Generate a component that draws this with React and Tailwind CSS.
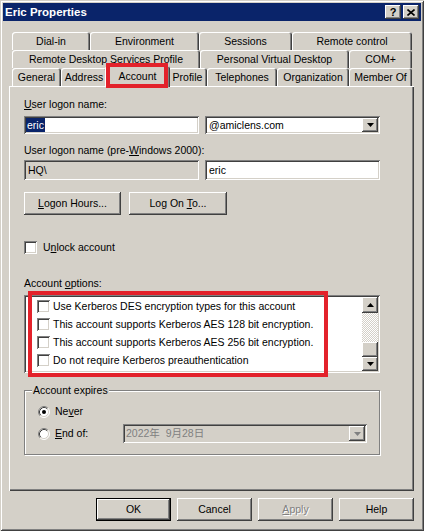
import React from 'react';

const RAISED =
  'shadow-[inset_-1px_-1px_0_#404040,inset_1px_1px_0_#ffffff,inset_-2px_-2px_0_#808080,inset_2px_2px_0_#d4d0c8]';
const SUNKEN =
  'shadow-[inset_1px_1px_0_#808080,inset_-1px_-1px_0_#ffffff,inset_2px_2px_0_#404040,inset_-2px_-2px_0_#d4d0c8]';

const tabRows = [
  [
    { label: 'Dial-in', w: 'w-[78px]' },
    { label: 'Environment', w: 'w-[109px]' },
    { label: 'Sessions', w: 'w-[93px]' },
    { label: 'Remote control', w: 'w-[120px]' },
  ],
  [
    { label: 'Remote Desktop Services Profile', w: 'w-[188px]' },
    { label: 'Personal Virtual Desktop', w: 'w-[149px]' },
    { label: 'COM+', w: 'w-[63px]' },
  ],
  [
    { label: 'General', w: 'w-[49px]' },
    { label: 'Address', w: 'w-[46px]' },
    { label: 'Account', w: 'w-[65px]', active: true },
    { label: 'Profile', w: 'w-[39px]' },
    { label: 'Telephones', w: 'w-[70px]' },
    { label: 'Organization', w: 'w-[72px]' },
    { label: 'Member Of', w: 'w-[63px]' },
  ],
];

const kerberosOptions = [
  'Use Kerberos DES encryption types for this account',
  'This account supports Kerberos AES 128 bit encryption.',
  'This account supports Kerberos AES 256 bit encryption.',
  'Do not require Kerberos preauthentication',
];

const Arrow = ({ up = false, color = '#000000' }) => (
  <svg width="7" height="4" viewBox="0 0 7 4">
    <polygon points={up ? '3.5,0 7,4 0,4' : '0,0 7,0 3.5,4'} fill={color} />
  </svg>
);

const CheckBox = () => <span className={`block w-[13px] h-[13px] bg-white shrink-0 ${SUNKEN}`} />;

const Radio = ({ checked }) => (
  <svg width="12" height="12" viewBox="0 0 12 12" className="shrink-0">
    <circle cx="6" cy="6" r="5" fill="#ffffff" />
    <path d="M2.11 9.89 A5.5 5.5 0 0 1 9.89 2.11" stroke="#808080" fill="none" />
    <path d="M9.89 2.11 A5.5 5.5 0 0 1 2.11 9.89" stroke="#ffffff" fill="none" />
    <path d="M2.82 9.18 A4.5 4.5 0 0 1 9.18 2.82" stroke="#404040" fill="none" />
    <path d="M9.18 2.82 A4.5 4.5 0 0 1 2.82 9.18" stroke="#d4d0c8" fill="none" />
    {checked && <circle cx="6" cy="6" r="2" fill="#000000" />}
  </svg>
);

const PushButton = ({ children, className = '' }) => (
  <button className={`h-[23px] flex items-center justify-center bg-[#d4d0c8] ${RAISED} ${className}`}>
    {children}
  </button>
);

export default function App() {
  return (
    <div className="relative w-[424px] h-[531px] bg-[#d4d0c8] p-[3px] flex flex-col font-['Liberation_Sans','Noto_Sans_CJK_SC',sans-serif] text-[10.5px] leading-[13px] text-black shadow-[inset_1px_1px_0_#d4d0c8,inset_-1px_-1px_0_#404040,inset_2px_2px_0_#ffffff,inset_-2px_-2px_0_#808080]">
      {/* Title bar */}
      <div className="h-[18px] shrink-0 bg-[#0a246a] flex items-center justify-between pl-[2px] pr-[2px]">
        <span className="text-white font-bold text-[11.5px]">Eric Properties</span>
        <div className="flex gap-[2px]">
          <div className={`w-[16px] h-[14px] bg-[#d4d0c8] flex items-center justify-center font-bold text-[11px] ${RAISED}`}>?</div>
          <div className={`w-[16px] h-[14px] bg-[#d4d0c8] flex items-center justify-center ${RAISED}`}>
            <svg width="8" height="7" viewBox="0 0 8 7">
              <path d="M0.5 0.5 L7.5 6.5 M7.5 0.5 L0.5 6.5" stroke="#000" strokeWidth="1.6" />
            </svg>
          </div>
        </div>
      </div>

      {/* Tabs */}
      <div className="mt-[11px] ml-[9px] w-[400px] flex flex-col">
        {tabRows.map((row, i) => (
          <div key={i} className="flex items-start h-[18px]">
            {row.map((tab) =>
              tab.active ? (
                <div
                  key={tab.label}
                  className={`${tab.w} -mx-[2px] -mt-[2px] h-[21px] relative z-10 bg-[#d4d0c8] rounded-t-[3px] flex justify-center pt-[4px] shadow-[inset_1px_1px_0_#ffffff,inset_-1px_0_0_#404040,inset_-2px_0_0_#808080]`}
                >
                  {tab.label}
                </div>
              ) : (
                <div
                  key={tab.label}
                  className={`${tab.w} h-full rounded-t-[3px] flex items-center justify-center shadow-[inset_1px_1px_0_#ffffff,inset_-1px_0_0_#404040,inset_-2px_0_0_#808080]`}
                >
                  {tab.label}
                </div>
              )
            )}
          </div>
        ))}
      </div>

      {/* Tab page */}
      <div className="ml-[6px] w-[405px] h-[405px] shrink-0 pl-[15px] flex flex-col shadow-[inset_1px_1px_0_#ffffff,inset_-1px_-1px_0_#404040,inset_-2px_-2px_0_#808080]">
        <div className="mt-[12px]">
          <span className="underline underline-offset-[1px]">U</span>ser logon name:
        </div>
        <div className="mt-[5px] flex gap-[6px]">
          <div className={`w-[175px] h-[18px] bg-white flex items-center pl-[2px] ${SUNKEN}`}>
            <span className="bg-[#0a246a] text-white px-[1px] leading-[14px]">eric</span>
          </div>
          <div className={`w-[175px] h-[18px] bg-white flex items-center justify-between pl-[4px] pr-[2px] ${SUNKEN}`}>
            <span>@amiclens.com</span>
            <div className={`w-[16px] h-[14px] bg-[#d4d0c8] flex items-center justify-center ${RAISED}`}>
              <Arrow />
            </div>
          </div>
        </div>
        <div className="mt-[10px]">
          User logon name (pre-<span className="underline underline-offset-[1px]">W</span>indows 2000):
        </div>
        <div className="mt-[3px] flex gap-[6px]">
          <div className={`w-[175px] h-[20px] bg-[#d4d0c8] flex items-center pl-[4px] ${SUNKEN}`}>HQ\</div>
          <div className={`w-[175px] h-[20px] bg-white flex items-center pl-[4px] ${SUNKEN}`}>eric</div>
        </div>
        <div className="mt-[12px] flex gap-[8px]">
          <PushButton className="w-[97px]">
            <span>
              <span className="underline underline-offset-[1px]">L</span>ogon Hours...
            </span>
          </PushButton>
          <PushButton className="w-[98px]">
            <span>
              Log On <span className="underline underline-offset-[1px]">T</span>o...
            </span>
          </PushButton>
        </div>

        <div className="mt-[26px] flex items-center gap-[6px]">
          <CheckBox />
          <span>
            U<span className="underline underline-offset-[1px]">n</span>lock account
          </span>
        </div>

        <div className="mt-[23px]">
          Account <span className="underline underline-offset-[1px]">o</span>ptions:
        </div>
        <div className={`mt-[5px] w-[356px] h-[78px] bg-white flex p-[2px] ${SUNKEN}`}>
          <div className="flex-1 flex flex-col pl-[11px]">
            {kerberosOptions.map((opt) => (
              <div key={opt} className="h-[18px] flex items-center gap-[3px]">
                <CheckBox />
                <span>{opt}</span>
              </div>
            ))}
          </div>
          <div className="w-[16px] flex flex-col">
            <div className={`h-[16px] bg-[#d4d0c8] flex items-center justify-center ${RAISED}`}>
              <Arrow up />
            </div>
            <div className="h-[29px] bg-[repeating-conic-gradient(#ffffff_0_25%,#d4d0c8_0_50%)] bg-[length:2px_2px]" />
            <div className={`h-[15px] bg-[#d4d0c8] ${RAISED}`} />
            <div className={`h-[14px] bg-[#d4d0c8] flex items-center justify-center ${RAISED}`}>
              <Arrow />
            </div>
          </div>
        </div>

        {/* Account expires group */}
        <div className="relative mt-[17px] w-[356px] h-[65px] border border-[#808080] shadow-[inset_1px_1px_0_#ffffff,1px_1px_0_#ffffff] pl-[13px] pt-[14px] flex flex-col">
          <span className="absolute -top-[7px] left-[7px] bg-[#d4d0c8] px-[1px]">Account expires</span>
          <div className="flex items-center gap-[5px]">
            <Radio checked />
            <span>
              Ne<span className="underline underline-offset-[1px]">v</span>er
            </span>
          </div>
          <div className="mt-[6px] flex items-center">
            <Radio />
            <span className="ml-[5px] w-[68px]">
              <span className="underline underline-offset-[1px]">E</span>nd of:
            </span>
            <div className={`w-[244px] h-[19px] bg-[#d4d0c8] flex items-center justify-between pl-[3px] pr-[2px] text-[#808080] ${SUNKEN}`}>
              <span>2022年&nbsp;&nbsp;9月28日</span>
              <div className={`w-[16px] h-[15px] bg-[#d4d0c8] flex items-center justify-center ${RAISED}`}>
                <Arrow color="#808080" />
              </div>
            </div>
          </div>
        </div>
      </div>

      {/* Dialog buttons */}
      <div className="mt-[7px] pr-[7px] flex justify-end gap-[6px]">
        <PushButton className="w-[75px] border border-black">OK</PushButton>
        <PushButton className="w-[75px]">Cancel</PushButton>
        <PushButton className="w-[75px] text-[#808080] [text-shadow:1px_1px_0_#ffffff]">
          <span>
            <span className="underline underline-offset-[1px]">A</span>pply
          </span>
        </PushButton>
        <PushButton className="w-[75px]">Help</PushButton>
      </div>

      {/* Red annotation boxes */}
      <div className="absolute left-[106px] top-[63px] w-[62px] h-[25px] border-4 border-[#e3222b] z-20" />
      <div className="absolute left-[28px] top-[291px] w-[300px] h-[86px] border-4 border-[#e3222b] z-20" />
    </div>
  );
}
